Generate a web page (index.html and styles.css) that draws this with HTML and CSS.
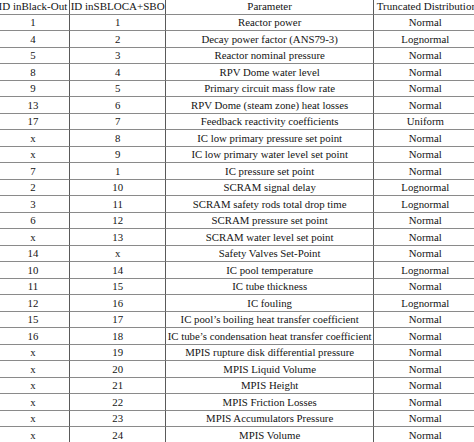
FILE: index.html
```html
<!DOCTYPE html>
<html>
<head>
<meta charset="utf-8">
<link rel="stylesheet" href="styles.css">
</head>
<body>
<div class="sheet">
  <div class="grid">
    <div class="c h">ID inBlack-Out</div><div class="c h">ID inSBLOCA+SBO</div><div class="c h">Parameter</div><div class="c h last left">Truncated Distribution</div>
    <div class="c">1</div><div class="c">1</div><div class="c">Reactor power</div><div class="c last">Normal</div>
    <div class="c">4</div><div class="c">2</div><div class="c">Decay power factor (ANS79-3)</div><div class="c last">Lognormal</div>
    <div class="c">5</div><div class="c">3</div><div class="c">Reactor nominal pressure</div><div class="c last">Normal</div>
    <div class="c">8</div><div class="c">4</div><div class="c">RPV Dome water level</div><div class="c last">Normal</div>
    <div class="c">9</div><div class="c">5</div><div class="c">Primary circuit mass flow rate</div><div class="c last">Normal</div>
    <div class="c">13</div><div class="c">6</div><div class="c">RPV Dome (steam zone) heat losses</div><div class="c last">Normal</div>
    <div class="c">17</div><div class="c">7</div><div class="c">Feedback reactivity coefficients</div><div class="c last">Uniform</div>
    <div class="c">x</div><div class="c">8</div><div class="c">IC low primary pressure set point</div><div class="c last">Normal</div>
    <div class="c">x</div><div class="c">9</div><div class="c">IC low primary water level set point</div><div class="c last">Normal</div>
    <div class="c">7</div><div class="c">1</div><div class="c">IC pressure set point</div><div class="c last">Normal</div>
    <div class="c">2</div><div class="c">10</div><div class="c">SCRAM signal delay</div><div class="c last">Lognormal</div>
    <div class="c">3</div><div class="c">11</div><div class="c">SCRAM safety rods total drop time</div><div class="c last">Lognormal</div>
    <div class="c">6</div><div class="c">12</div><div class="c">SCRAM pressure set point</div><div class="c last">Normal</div>
    <div class="c">x</div><div class="c">13</div><div class="c">SCRAM water level set point</div><div class="c last">Normal</div>
    <div class="c">14</div><div class="c">x</div><div class="c">Safety Valves Set-Point</div><div class="c last">Normal</div>
    <div class="c">10</div><div class="c">14</div><div class="c">IC pool temperature</div><div class="c last">Lognormal</div>
    <div class="c">11</div><div class="c">15</div><div class="c">IC tube thickness</div><div class="c last">Normal</div>
    <div class="c">12</div><div class="c">16</div><div class="c">IC fouling</div><div class="c last">Lognormal</div>
    <div class="c">15</div><div class="c">17</div><div class="c">IC pool’s boiling heat transfer coefficient</div><div class="c last">Normal</div>
    <div class="c">16</div><div class="c">18</div><div class="c">IC tube’s condensation heat transfer coefficient</div><div class="c last">Normal</div>
    <div class="c">x</div><div class="c">19</div><div class="c">MPIS rupture disk differential pressure</div><div class="c last">Normal</div>
    <div class="c">x</div><div class="c">20</div><div class="c">MPIS Liquid Volume</div><div class="c last">Normal</div>
    <div class="c">x</div><div class="c">21</div><div class="c">MPIS Height</div><div class="c last">Normal</div>
    <div class="c">x</div><div class="c">22</div><div class="c">MPIS Friction Losses</div><div class="c last">Normal</div>
    <div class="c">x</div><div class="c">23</div><div class="c">MPIS Accumulators Pressure</div><div class="c last">Normal</div>
    <div class="c">x</div><div class="c">24</div><div class="c">MPIS Volume</div><div class="c last">Normal</div>
  </div>
</div>
</body>
</html>
```
FILE: styles.css
```css
html, body {
  margin: 0;
  padding: 0;
  background: #fff;
}
.sheet {
  width: 474px;
  height: 442px;
  overflow: hidden;
}
.grid {
  display: grid;
  grid-template-columns: 72.8px 96.7px 207.3px 108px;
  grid-template-rows: 14.8px;
  grid-auto-rows: 16.5px;
  margin-left: -3px;
  font-family: "Liberation Serif", "Times New Roman", serif;
  font-size: 10.8px;
  color: #141414;
}
.c {
  box-sizing: border-box;
  display: flex;
  align-items: center;
  justify-content: center;
  white-space: nowrap;
  border-bottom: 1px solid #8a8a8a;
  border-right: 1px solid #5a5a5a;
  line-height: 1;
}
.c.h {
  font-size: 11px;
}
.c.last {
  border-right: none;
  justify-content: center;
  padding-right: 5px;
}
.c.h.left {
  justify-content: flex-start;
  padding-left: 3px;
  padding-right: 0;
}
```
